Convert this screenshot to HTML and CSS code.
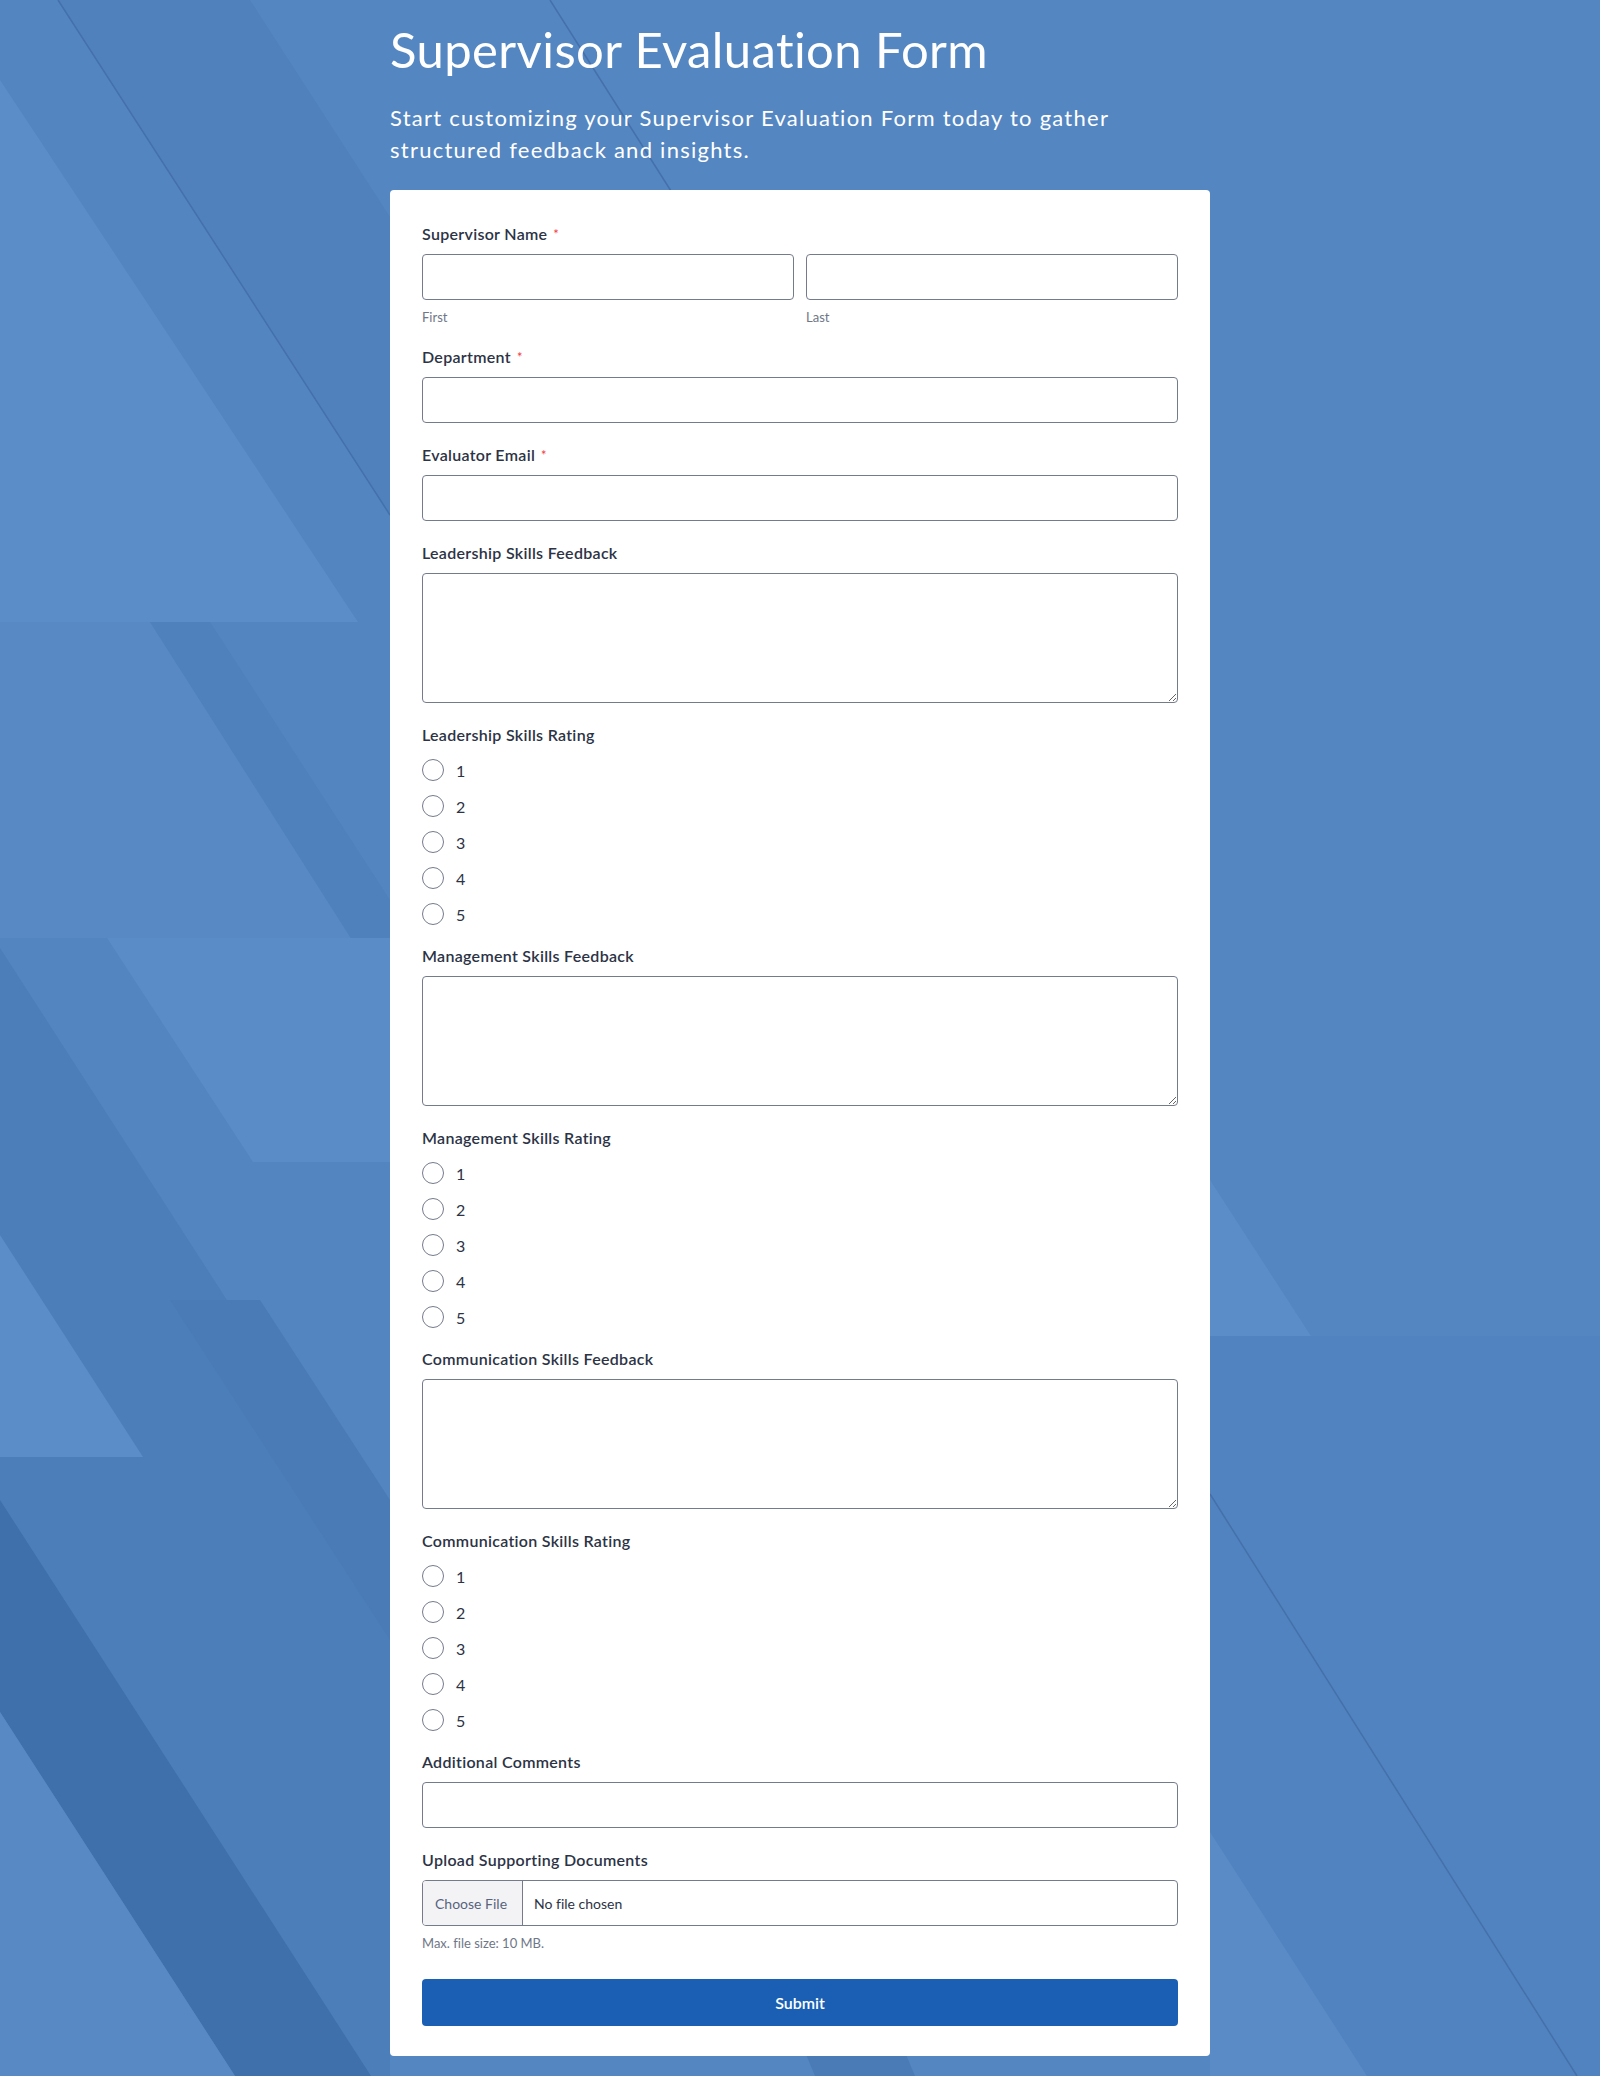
FILE: index.html
```html
<!DOCTYPE html>
<html lang="en">
<head>
<meta charset="utf-8">
<title>Supervisor Evaluation Form</title>
<link rel="stylesheet" href="styles.css">
</head>
<body>
<svg class="bg" width="1600" height="2076" viewBox="0 0 1600 2076" aria-hidden="true">
  <rect width="1600" height="2076" fill="#5486c2"/>
  <!-- top-left -->
  <polygon points="0,0 58,0 390,515 390,2076 0,2076" fill="#5385c1"/>
  <polygon points="58,0 250,0 390,217 390,515" fill="#5081bd"/>
  <polygon points="0,80 358,622 0,622" fill="#5b8dc8"/>
  <polygon points="0,622 150,622 355,938 0,938" fill="#5889c5"/>
  <polygon points="150,622 210,622 390,900 390,1000" fill="#4f81bd"/>
  <!-- lower-left -->
  <polygon points="0,948 390,1553 390,2076 0,2076" fill="#4c7eba"/>
  <polygon points="107,938 390,938 390,1162 253,1162" fill="#5a8cc7"/>
  <polygon points="0,1235 143,1457 0,1457" fill="#5b8dc8"/>
  <polygon points="0,1500 371,2076 235,2076 0,1712" fill="#3f70ac"/>
  <polygon points="0,1712 235,2076 0,2076" fill="#5889c5"/>
  <polygon points="170,1300 260,1300 390,1500 390,1640" fill="#4a7bb7"/>
  <!-- right -->
  <polygon points="1210,1180 1311,1336 1210,1336" fill="#5b8dc8"/>
  <polygon points="1210,1336 1600,1336 1600,2076 1210,2076" fill="#5083bf"/>
  <polygon points="1210,1832 1367,2076 1210,2076" fill="#5a8bc7"/>
  <polygon points="800,2040 900,2040 915,2076 815,2076" fill="#4a7bb7"/>
  <!-- thin lines -->
  <line x1="58" y1="0" x2="390" y2="515" stroke="#4470ab" stroke-width="1.5"/>
  <line x1="550" y1="0" x2="671" y2="191" stroke="#4470ab" stroke-width="1.5"/>
  <line x1="1210" y1="1494" x2="1577" y2="2076" stroke="#4470ab" stroke-width="1.5"/>
</svg>

<main class="page">
  <header class="intro">
    <h1 class="title">Supervisor Evaluation Form</h1>
    <p class="subtitle">Start customizing your Supervisor Evaluation Form today to gather structured feedback and insights.</p>
  </header>

  <form class="card">
    <div class="field">
      <label class="label">Supervisor Name<span class="req">*</span></label>
      <div class="name-row">
        <div class="name-col">
          <input class="input" type="text">
          <span class="sublabel">First</span>
        </div>
        <div class="name-col">
          <input class="input" type="text">
          <span class="sublabel">Last</span>
        </div>
      </div>
    </div>

    <div class="field">
      <label class="label">Department<span class="req">*</span></label>
      <input class="input" type="text">
    </div>

    <div class="field">
      <label class="label">Evaluator Email<span class="req">*</span></label>
      <input class="input" type="email">
    </div>

    <div class="field">
      <label class="label">Leadership Skills Feedback</label>
      <textarea class="textarea"></textarea>
    </div>

    <div class="field field-radio">
      <label class="label label-radio">Leadership Skills Rating</label>
      <div class="options">
        <label class="option"><input class="radio" type="radio" name="lead"><span>1</span></label>
        <label class="option"><input class="radio" type="radio" name="lead"><span>2</span></label>
        <label class="option"><input class="radio" type="radio" name="lead"><span>3</span></label>
        <label class="option"><input class="radio" type="radio" name="lead"><span>4</span></label>
        <label class="option"><input class="radio" type="radio" name="lead"><span>5</span></label>
      </div>
    </div>

    <div class="field">
      <label class="label">Management Skills Feedback</label>
      <textarea class="textarea"></textarea>
    </div>

    <div class="field field-radio">
      <label class="label label-radio">Management Skills Rating</label>
      <div class="options">
        <label class="option"><input class="radio" type="radio" name="mgmt"><span>1</span></label>
        <label class="option"><input class="radio" type="radio" name="mgmt"><span>2</span></label>
        <label class="option"><input class="radio" type="radio" name="mgmt"><span>3</span></label>
        <label class="option"><input class="radio" type="radio" name="mgmt"><span>4</span></label>
        <label class="option"><input class="radio" type="radio" name="mgmt"><span>5</span></label>
      </div>
    </div>

    <div class="field">
      <label class="label">Communication Skills Feedback</label>
      <textarea class="textarea"></textarea>
    </div>

    <div class="field field-radio">
      <label class="label label-radio">Communication Skills Rating</label>
      <div class="options">
        <label class="option"><input class="radio" type="radio" name="comm"><span>1</span></label>
        <label class="option"><input class="radio" type="radio" name="comm"><span>2</span></label>
        <label class="option"><input class="radio" type="radio" name="comm"><span>3</span></label>
        <label class="option"><input class="radio" type="radio" name="comm"><span>4</span></label>
        <label class="option"><input class="radio" type="radio" name="comm"><span>5</span></label>
      </div>
    </div>

    <div class="field">
      <label class="label">Additional Comments</label>
      <input class="input" type="text">
    </div>

    <div class="field field-upload">
      <label class="label">Upload Supporting Documents</label>
      <div class="file">
        <span class="file-btn">Choose File</span>
        <span class="file-name">No file chosen</span>
      </div>
      <span class="sublabel">Max. file size: 10 MB.</span>
    </div>

    <button class="submit" type="button">Submit</button>
  </form>
</main>
</body>
</html>
```

FILE: styles.css
```css
* {
  box-sizing: border-box;
}

html, body {
  margin: 0;
  padding: 0;
}

body {
  position: relative;
  background: #5486c2;
  font-family: Lato, "Noto Sans", "Liberation Sans", sans-serif;
  font-variant-ligatures: none;
  color: #2c3345;
  min-height: 2076px;
  overflow: hidden;
}

.bg {
  position: absolute;
  top: 0;
  left: 0;
  z-index: 0;
  display: block;
}

.page {
  position: relative;
  z-index: 1;
  width: 820px;
  margin: 0 auto;
  padding-top: 20px;
  padding-bottom: 18px;
}

.intro {
  color: #ffffff;
}

.title {
  margin: 0;
  font-size: 49px;
  font-weight: 400;
  line-height: 58px;
  letter-spacing: 0.4px;
}

.subtitle {
  margin: 24px 0 0;
  font-size: 22px;
  font-weight: 400;
  line-height: 32px;
  letter-spacing: 1.25px;
}

.card {
  margin-top: 24px;
  background: #ffffff;
  border-radius: 4px;
  padding: 34px 32px 30px;
  display: flex;
  flex-direction: column;
}

.field {
  display: flex;
  flex-direction: column;
  margin-bottom: 22px;
}

.field-radio {
  margin-bottom: 21px;
}

.label {
  display: block;
  font-size: 16px;
  font-weight: 600;
  line-height: 20px;
  letter-spacing: 0.3px;
  color: #2c3345;
  margin-bottom: 10px;
}

.label-radio {
  margin-bottom: 14px;
}

.req {
  color: #f23a3c;
  font-size: 13px;
  font-weight: 400;
  margin-left: 6px;
  vertical-align: 1px;
}

.name-row {
  display: grid;
  grid-template-columns: 1fr 1fr;
  column-gap: 12px;
}

.name-col {
  display: flex;
  flex-direction: column;
}

.input {
  display: block;
  width: 100%;
  height: 46px;
  border: 1px solid #747b8b;
  border-radius: 4px;
  background: #ffffff;
  font-family: inherit;
  font-size: 16px;
  padding: 0 12px;
  outline: none;
}

.textarea {
  display: block;
  width: 100%;
  height: 130px;
  border: 1px solid #747b8b;
  border-radius: 4px;
  background: #ffffff;
  font-family: inherit;
  font-size: 16px;
  padding: 10px 12px;
  outline: none;
  resize: vertical;
}

.sublabel {
  display: block;
  margin-top: 9px;
  font-size: 13px;
  line-height: 16px;
  color: #6f7687;
}

.options {
  display: flex;
  flex-direction: column;
  gap: 14px;
}

.option {
  display: flex;
  align-items: center;
  height: 22px;
  gap: 12px;
  font-size: 16px;
  color: #2c3345;
}

.radio {
  appearance: none;
  -webkit-appearance: none;
  margin: 0;
  width: 22px;
  height: 22px;
  border: 1px solid #747b8b;
  border-radius: 50%;
  background: #ffffff;
  flex: none;
}

.field-upload {
  margin-bottom: 28px;
}

.file {
  display: flex;
  align-items: stretch;
  height: 46px;
  border: 1px solid #747b8b;
  border-radius: 4px;
  overflow: hidden;
  font-size: 14px;
}

.file-btn {
  display: flex;
  align-items: center;
  width: 100px;
  padding-left: 12px;
  background: #f3f3f5;
  border-right: 1px solid #747b8b;
  color: #57647e;
}

.file-name {
  display: flex;
  align-items: center;
  padding-left: 11px;
  color: #2c3345;
}

.submit {
  display: block;
  width: 100%;
  height: 47px;
  border: none;
  border-radius: 4px;
  background: #1a5fb3;
  color: #ffffff;
  font-family: inherit;
  font-size: 16px;
  font-weight: 600;
}
```
